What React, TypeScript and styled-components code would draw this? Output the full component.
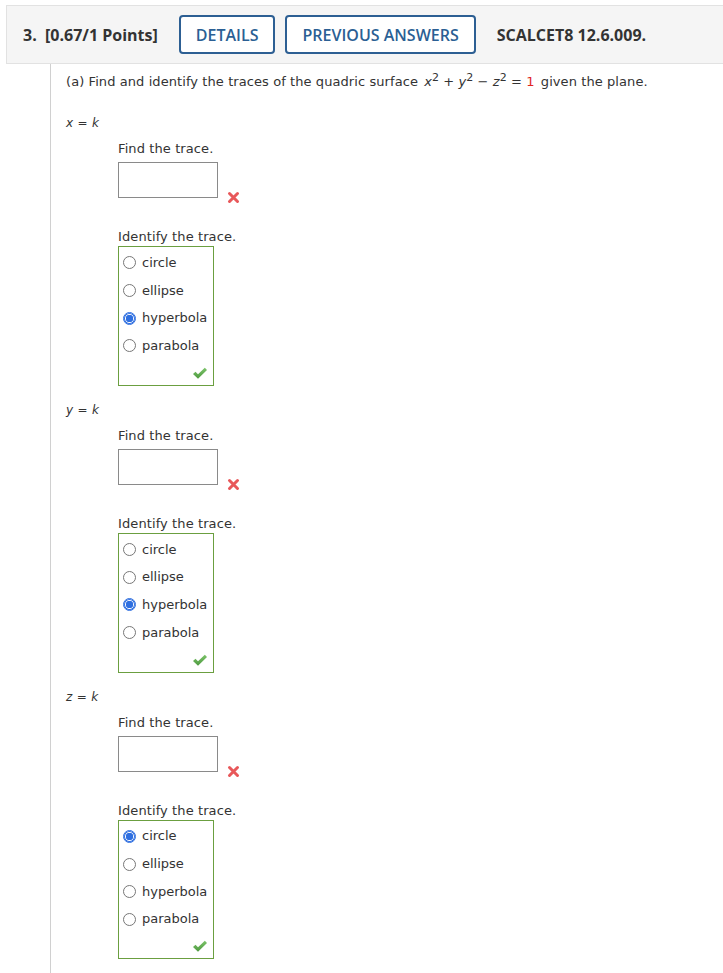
import React from 'react';
import styled, { createGlobalStyle } from 'styled-components';

const GlobalStyle = createGlobalStyle`
  html, body {
    margin: 0;
    padding: 0;
    background: #ffffff;
  }
  body {
    font-family: 'DejaVu Sans', Verdana, sans-serif;
    color: #333333;
    overflow: hidden;
  }
`;

type Part = {
  variable: string;
  selected: string;
};

const parts: Part[] = [
  { variable: 'x', selected: 'hyperbola' },
  { variable: 'y', selected: 'hyperbola' },
  { variable: 'z', selected: 'circle' },
];

const choices = ['circle', 'ellipse', 'hyperbola', 'parabola'];

function CrossIcon() {
  return (
    <svg width="13" height="13" viewBox="0 0 13 13">
      <path
        d="M2.5 2.5 L10.5 10.5 M10.5 2.5 L2.5 10.5"
        stroke="#e8585a"
        strokeWidth="3"
        strokeLinecap="round"
      />
    </svg>
  );
}

function CheckIcon() {
  return (
    <svg width="16" height="13" viewBox="0 0 16 13">
      <defs>
        <linearGradient id="chk" x1="0" y1="0" x2="0" y2="1">
          <stop offset="0" stopColor="#7cc36a" />
          <stop offset="1" stopColor="#4e9a3f" />
        </linearGradient>
      </defs>
      <path
        d="M1 7 L3.5 4.8 L6 7.3 L12.8 0.8 L15 3 L6 11.8 Z"
        fill="url(#chk)"
      />
    </svg>
  );
}

function App() {
  return (
    <Page>
      <GlobalStyle />
      <Header>
        <Title>3.&nbsp; [0.67/1 Points]</Title>
        <HeaderButton $space={10}>DETAILS</HeaderButton>
        <HeaderButton $space={21}>PREVIOUS ANSWERS</HeaderButton>
        <Code>SCALCET8 12.6.009.</Code>
      </Header>
      <Body>
        <Question>
          (a) Find and identify the traces of the quadric surface{' '}
          <Equation>
            <i>x</i>
            <sup>2</sup> + <i>y</i>
            <sup>2</sup> − <i>z</i>
            <sup>2</sup> = <Red>1</Red>
          </Equation>{' '}
          given the plane.
        </Question>
        {parts.map((part) => (
          <Section key={part.variable}>
            <PlaneLabel>
              <i>{part.variable}</i> = <i>k</i>
            </PlaneLabel>
            <Indent>
              <Prompt>Find the trace.</Prompt>
              <AnswerRow>
                <AnswerInput />
                <Mark>
                  <CrossIcon />
                </Mark>
              </AnswerRow>
              <Prompt $gap={24}>Identify the trace.</Prompt>
              <ChoiceBox>
                {choices.map((c) => (
                  <Choice key={c}>
                    <Radio $checked={c === part.selected} />
                    {c}
                  </Choice>
                ))}
                <CheckRow>
                  <CheckIcon />
                </CheckRow>
              </ChoiceBox>
            </Indent>
          </Section>
        ))}
      </Body>
    </Page>
  );
}

export default App;

const Page = styled.div`
  padding: 5px 0 0 6px;
  height: 973px;
  box-sizing: border-box;
  display: flex;
  flex-direction: column;
`;

const Header = styled.div`
  display: flex;
  align-items: center;
  height: 59px;
  box-sizing: border-box;
  margin-right: -4px;
  padding: 0 0 0 16px;
  background: #f5f5f5;
  border: 1px solid #e2e2e2;
  font-family: 'Open Sans', 'Liberation Sans', sans-serif;
`;

const Title = styled.span`
  font-size: 16px;
  font-weight: 700;
  color: #333333;
  margin-right: 21px;
`;

const HeaderButton = styled.span<{ $space: number }>`
  display: inline-flex;
  align-items: center;
  height: 39px;
  box-sizing: border-box;
  padding: 0 15px;
  margin-right: ${(p) => p.$space}px;
  border: 2px solid #2d5f93;
  border-radius: 4px;
  background: #ffffff;
  color: #2b5f94;
  font-size: 16px;
  font-weight: 600;
`;

const Code = styled.span`
  font-size: 16px;
  font-weight: 700;
  color: #333333;
`;

const Body = styled.div`
  flex: 1;
  margin-left: 44px;
  border-left: 1px solid #d0d0d0;
  padding: 9px 0 0 15px;
  font-size: 13px;
  line-height: 18px;
`;

const Question = styled.div`
  height: 18px;
  white-space: nowrap;
  letter-spacing: 0.08px;
`;

const Equation = styled.span`
  margin-left: 2px;
  margin-right: 2px;
  sup {
    font-size: 11px;
    line-height: 0;
  }
`;

const Red = styled.span`
  color: #e0261f;
`;

const Section = styled.div`
  margin-top: 23px;
  & + & {
    margin-top: 15px;
  }
`;

const PlaneLabel = styled.div`
  height: 18px;
  font-size: 12px;
  letter-spacing: 0.3px;
`;

const Indent = styled.div`
  padding-left: 52px;
`;

const Prompt = styled.div<{ $gap?: number }>`
  margin-top: ${(p) => p.$gap ?? 8}px;
  height: 18px;
  letter-spacing: 0.1px;
`;

const AnswerRow = styled.div`
  display: flex;
  align-items: flex-start;
  margin-top: 4px;
`;

const AnswerInput = styled.div`
  width: 100px;
  height: 36px;
  box-sizing: border-box;
  border: 1px solid #8a8a8a;
  background: #ffffff;
`;

const Mark = styled.span`
  display: flex;
  margin: 29px 0 0 9px;
`;

const ChoiceBox = styled.div`
  width: 96px;
  box-sizing: border-box;
  border: 1px solid #6b9f40;
  padding: 2px 0 5px 4px;
`;

const Choice = styled.div`
  display: flex;
  align-items: center;
  height: 27.7px;
  gap: 6px;
  color: #333333;
`;

const Radio = styled.span<{ $checked: boolean }>`
  width: 13px;
  height: 13px;
  box-sizing: border-box;
  border-radius: 50%;
  border: 1px solid ${(p) => (p.$checked ? '#2f6fe0' : '#777777')};
  background: ${(p) =>
    p.$checked ? 'radial-gradient(circle, #2f6fe0 0 3.5px, #ffffff 4px)' : '#ffffff'};
  box-shadow: ${(p) => (p.$checked ? 'inset 0 0 0 1px #2f6fe0' : 'none')};
`;

const CheckRow = styled.div`
  display: flex;
  justify-content: flex-end;
  padding-right: 5px;
  margin-top: 7px;
  height: 13px;
`;
